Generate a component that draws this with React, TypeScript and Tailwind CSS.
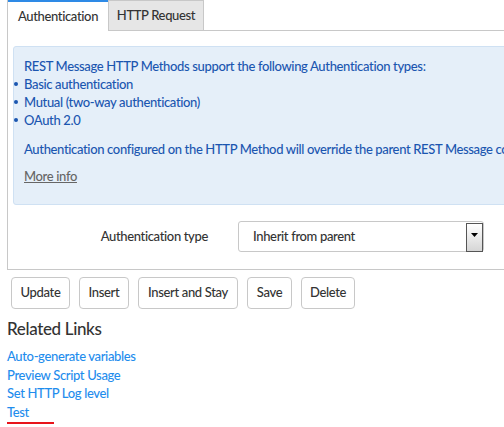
import React from "react";

const font = { fontFamily: "Lato, 'Noto Sans', sans-serif" };

export default function App() {
  return (
    <div className="w-[504px] h-[427px] overflow-hidden bg-white text-[13px] text-[#333] tracking-[-0.35px] font-medium" style={font}>
      <div className="ml-[7px] w-[800px] border-l border-b border-[#c8c8c8]">
        <div className="flex h-[31px]">
          <div className="w-[100px] h-[31px] border-t-2 border-[#2e8ae6] bg-white flex items-center justify-center text-[#333]">
            Authentication
          </div>
          <div className="w-[96px] h-[31px] border border-[#c8c8c8] bg-[#e6e6e6] flex items-center justify-center">
            HTTP Request
          </div>
          <div className="flex-1 border-b border-[#c8c8c8]" />
        </div>
        <div className="pt-[15px] pl-[5px]">
          <div className="w-[700px] bg-[#e5eff9] border border-[#cfe1f3] rounded-[3px] pl-[10px] pt-[10px] pb-[19px] text-[#1b56b0] leading-[18px]">
            <div>REST Message HTTP Methods support the following Authentication types:</div>
            <ul>
              {["Basic authentication", "Mutual (two-way authentication)", "OAuth 2.0"].map((t) => (
                <li key={t} className="flex items-center -ml-[10px]">
                  <span className="w-[4px] h-[4px] rounded-full bg-[#1b56b0] mr-[6px]" />
                  {t}
                </li>
              ))}
            </ul>
            <div className="mt-[11px] whitespace-nowrap">Authentication configured on the HTTP Method will override the parent REST Message configuration.</div>
            <div className="mt-[9px]">
              <a className="text-[#666] underline">More info</a>
            </div>
          </div>
        </div>
        <div className="flex items-center pt-[16px] pb-[17px]">
          <div className="w-[200px] text-right">Authentication type</div>
          <div className="ml-[30px] relative w-[246px] h-[31px] border border-[#c8c8c8] rounded-[3px] flex items-center pl-[14px]">
            Inherit from parent
            <div className="absolute right-0 top-[1px] w-[17px] h-[29px] border border-[#555] bg-gradient-to-b from-white to-[#d6d6d6] flex justify-center pt-[9px]">
              <svg width="7" height="4" viewBox="0 0 7 4">
                <path d="M0 0H7L3.5 4Z" fill="#000" />
              </svg>
            </div>
          </div>
        </div>
      </div>
      <div className="flex gap-[9px] ml-[11px] mt-[7px]">
        {[
          ["Update", "w-[59px]"],
          ["Insert", "w-[50px]"],
          ["Insert and Stay", "w-[100px]"],
          ["Save", "w-[45px]"],
          ["Delete", "w-[54px]"],
        ].map(([t, w]) => (
          <button key={t} className={`${w} h-[32px] border border-[#c8c8c8] rounded-[4px] bg-white text-[#333] flex items-center justify-center`}>
            {t}
          </button>
        ))}
      </div>
      <div className="ml-[7px] mt-[9px] text-[17px] leading-[22px] text-[#333]">Related Links</div>
      <div className="ml-[7px] mt-[7px] flex flex-col text-[#1f8ded] leading-[18.7px]">
        <a>Auto-generate variables</a>
        <a>Preview Script Usage</a>
        <a>Set HTTP Log level</a>
        <a className="w-fit">Test</a>
      </div>
      <div className="ml-[7px] mt-[0px] w-[47px] h-[2px] bg-[#e8141b]" />
    </div>
  );
}
